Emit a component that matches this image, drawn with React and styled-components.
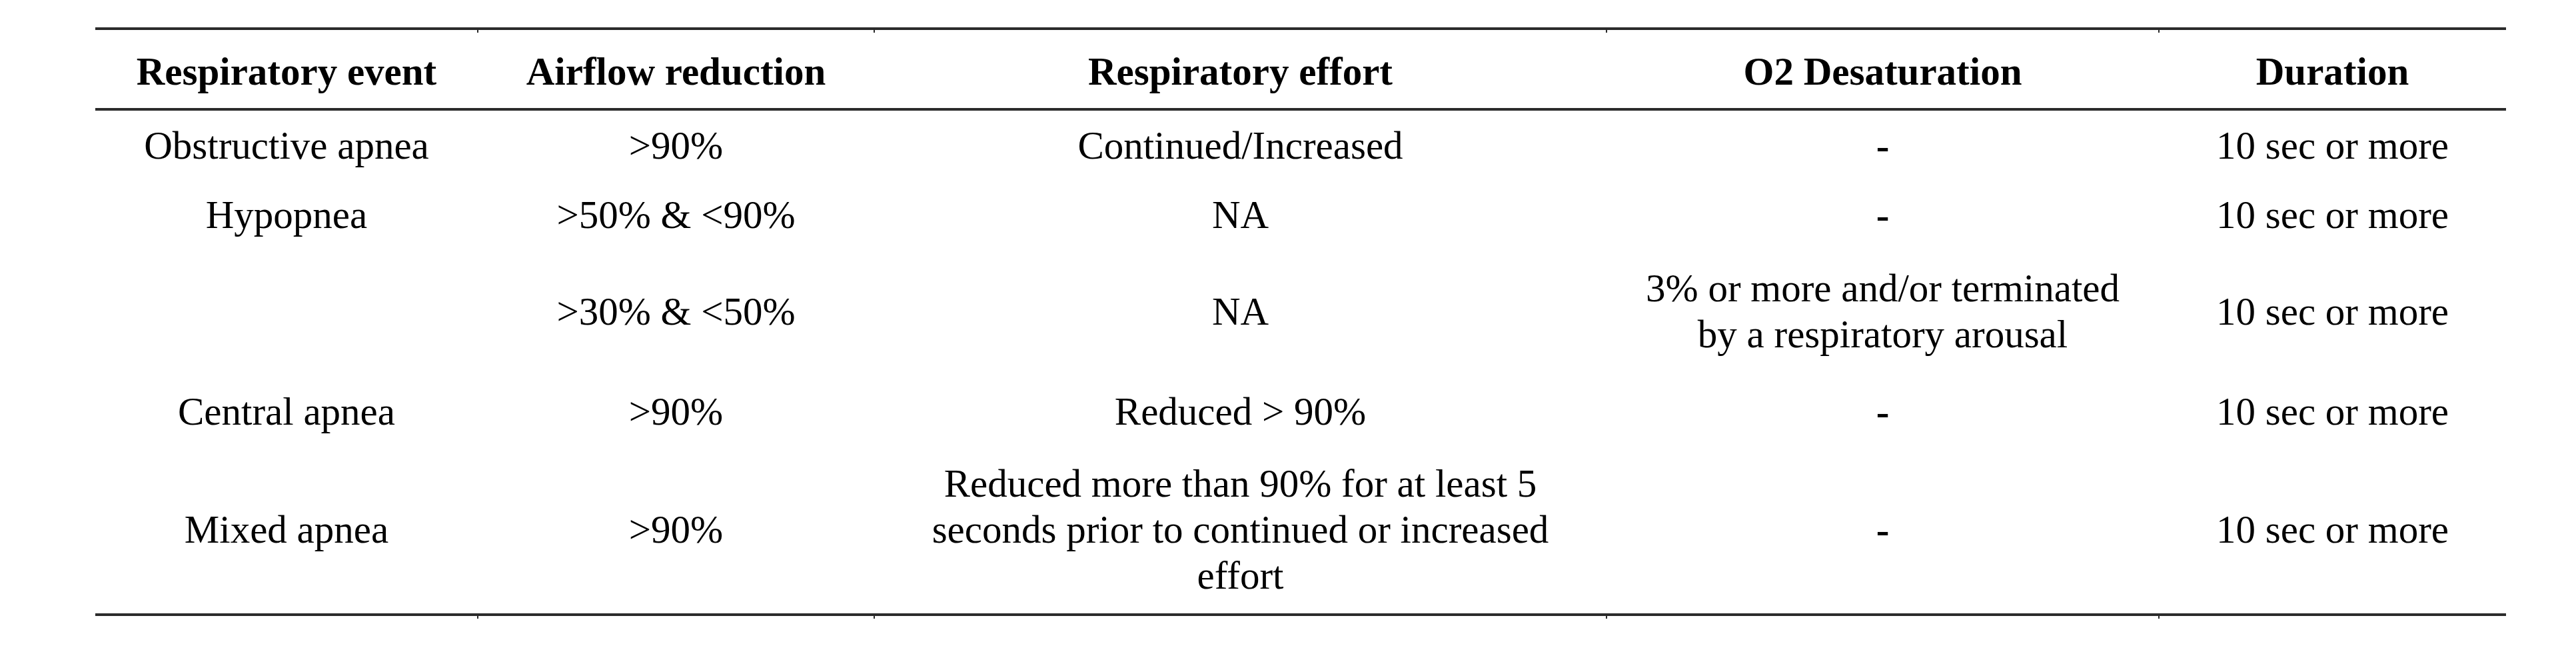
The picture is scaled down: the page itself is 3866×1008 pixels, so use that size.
import React from "react"
import styled, { createGlobalStyle } from "styled-components"

const GlobalStyle = createGlobalStyle`
  html, body {
    margin: 0;
    padding: 0;
    background: #fff;
  }
  body {
    font-family: "Liberation Serif", "Times New Roman", serif;
    color: #000;
  }
`

const Page = styled.div`
  width: 3866px;
  height: 1008px;
  padding: 41px 0 0 143px;
  box-sizing: border-box;
`

const Table = styled.table`
  width: 3618px;
  table-layout: fixed;
  border-collapse: separate;
  border-spacing: 0;
  border-top: 4px solid #2b2b2b;
  border-bottom: 4px solid #2b2b2b;
  font-size: 59px;
  line-height: 69px;
`

const Col = styled.col`
  width: ${(p) => p.$w}px;
`

const Th = styled.th`
  position: relative;
  padding: 28px 0 20px;
  font-weight: bold;
  text-align: center;
  border-bottom: 4px solid #2b2b2b;
  white-space: nowrap;

  &:not(:first-child)::before {
    content: "";
    position: absolute;
    left: -1px;
    top: 0;
    width: 2px;
    height: 4px;
    background: #2b2b2b;
  }
`

const Row = styled.tr`
  height: ${(p) => p.$h}px;

  & > td {
    padding-bottom: ${(p) => p.$pb || 0}px;
  }

  &:last-child > td:not(:first-child)::after {
    content: "";
    position: absolute;
    left: -1px;
    bottom: -8px;
    width: 2px;
    height: 4px;
    background: #2b2b2b;
  }
`

const Td = styled.td`
  position: relative;
  padding: 0 40px;
  text-align: center;
  vertical-align: middle;
  font-weight: normal;
`

const Dash = styled.span`
  font-weight: bold;
`

const columns = [
  { label: "Respiratory event", w: 574 },
  { label: "Airflow reduction", w: 595 },
  { label: "Respiratory effort", w: 1099 },
  { label: "O2 Desaturation", w: 829 },
  { label: "Duration", w: 521 },
]

const rows = [
  {
    h: 104,
    cells: ["Obstructive apnea", ">90%", "Continued/Increased", "-", "10 sec or more"],
  },
  {
    h: 105,
    cells: ["Hypopnea", ">50% & <90%", "NA", "-", "10 sec or more"],
  },
  {
    h: 184,
    cells: [
      "",
      ">30% & <50%",
      "NA",
      "3% or more and/or terminated by a respiratory arousal",
      "10 sec or more",
    ],
  },
  {
    h: 117,
    cells: ["Central apnea", ">90%", "Reduced > 90%", "-", "10 sec or more"],
  },
  {
    h: 244,
    pb: 7,
    cells: [
      "Mixed apnea",
      ">90%",
      "Reduced more than 90% for at least 5 seconds prior to continued or increased effort",
      "-",
      "10 sec or more",
    ],
  },
]

const App = () => {
  return (
    <Page>
      <GlobalStyle />
      <Table>
        <colgroup>
          {columns.map((c) => (
            <Col key={c.label} $w={c.w} />
          ))}
        </colgroup>
        <thead>
          <tr>
            {columns.map((c) => (
              <Th key={c.label}>{c.label}</Th>
            ))}
          </tr>
        </thead>
        <tbody>
          {rows.map((r, i) => (
            <Row key={i} $h={r.h} $pb={r.pb}>
              {r.cells.map((text, j) => (
                <Td key={j}>{text === "-" ? <Dash>-</Dash> : text}</Td>
              ))}
            </Row>
          ))}
        </tbody>
      </Table>
    </Page>
  )
}

export default App
